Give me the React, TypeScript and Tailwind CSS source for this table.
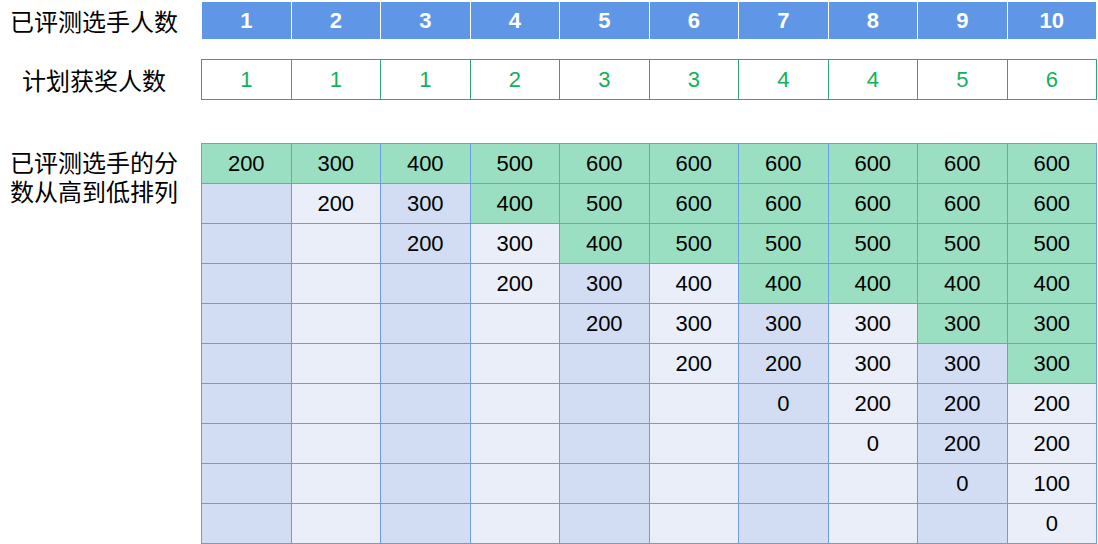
import React from 'react';

const cols = [1, 2, 3, 4, 5, 6, 7, 8, 9, 10];
const awards = [1, 1, 1, 2, 3, 3, 4, 4, 5, 6];

// scores of each column, high to low
const scores: number[][] = [
  [200],
  [300, 200],
  [400, 300, 200],
  [500, 400, 300, 200],
  [600, 500, 400, 300, 200],
  [600, 600, 500, 400, 300, 200],
  [600, 600, 500, 400, 300, 200, 0],
  [600, 600, 500, 400, 300, 300, 200, 0],
  [600, 600, 500, 400, 300, 300, 200, 200, 0],
  [600, 600, 500, 400, 300, 300, 200, 200, 100, 0],
];

const cjk = { fontFamily: '"Noto Sans CJK SC", "Noto Sans", sans-serif' };
const num = { fontFamily: '"Liberation Sans", Arial, sans-serif' };

const App: React.FC = () => {
  const rows = Array.from({ length: 10 }, (_, i) => i);

  return (
    <div className="w-[1098px] h-[544px] bg-white overflow-hidden pt-[2px] text-black">
      {/* 已评测选手人数 */}
      <div className="flex h-[37px] items-center">
        <div className="w-[188px] text-center text-[24px] leading-[29px]" style={cjk}>已评测选手人数</div>
        <div className="ml-[14px] w-[894px] h-full grid grid-cols-10 gap-px bg-white">
          {cols.map((c) => (
            <div key={c} className="bg-[#5f96e6] flex items-center justify-center text-white font-bold text-[22px]" style={num}>
              {c}
            </div>
          ))}
        </div>
      </div>

      {/* 计划获奖人数 */}
      <div className="flex h-[41px] items-center mt-[20px]">
        <div className="w-[188px] text-center text-[24px] leading-[29px]" style={cjk}>计划获奖人数</div>
        <div className="ml-[13px] w-[896px] h-full grid grid-cols-10 gap-px bg-[#2fa86b] p-px">
          {awards.map((a, i) => (
            <div key={i} className="bg-white flex items-center justify-center text-[#13b05a] text-[22px]" style={num}>
              {a}
            </div>
          ))}
        </div>
      </div>

      {/* 已评测选手的分数从高到低排列 */}
      <div className="flex mt-[43px]">
        <div className="w-[188px] pt-[4px] text-center text-[24px] leading-[29px]" style={cjk}>
          <div>已评测选手的分</div>
          <div>数从高到低排列</div>
        </div>
        <div className="ml-[13px] w-[896px] grid grid-cols-10 auto-rows-[39px] gap-px bg-[#6d9ce6] p-px">
          {rows.map((r) =>
            cols.map((_, j) => {
              const v = scores[j][r];
              const green = r < awards[j];
              const bg = green ? 'bg-[#9adfc1]' : j % 2 === 0 ? 'bg-[#d2ddf4]' : 'bg-[#e9eef9]';
              return (
                <div key={`${r}-${j}`} className={`${bg} flex items-center justify-center text-[22px]`} style={num}>
                  {v !== undefined ? v : ''}
                </div>
              );
            })
          )}
        </div>
      </div>
    </div>
  );
};

export default App;
